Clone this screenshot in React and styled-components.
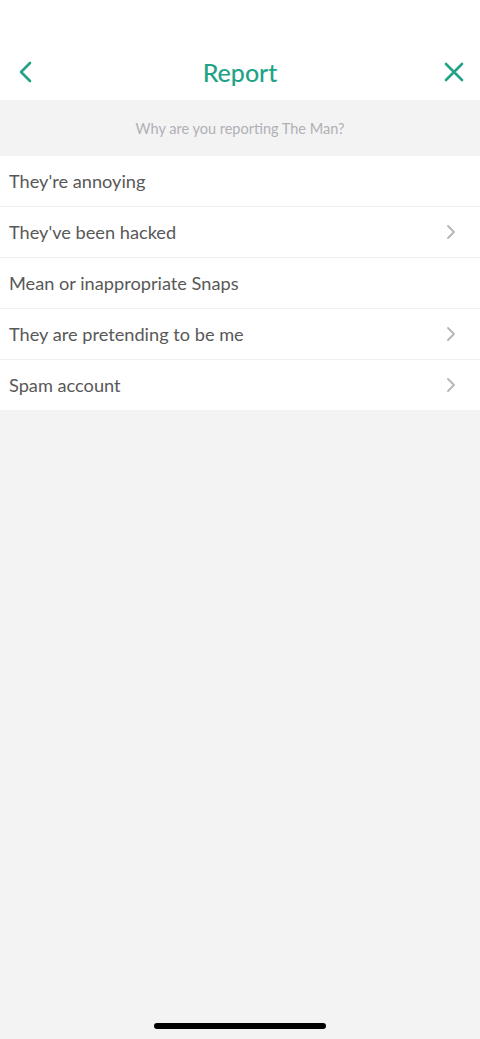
import React from "react";
import styled, { createGlobalStyle } from "styled-components";

const GlobalStyle = createGlobalStyle`
	html, body {
		margin: 0;
		padding: 0;
		background: #f3f3f3;
		font-family: Lato, "Noto Sans", sans-serif;
	}
`;

const reasons = [
	{ label: "They're annoying", more: false },
	{ label: "They've been hacked", more: true },
	{ label: "Mean or inappropriate Snaps", more: false },
	{ label: "They are pretending to be me", more: true },
	{ label: "Spam account", more: true },
];

function App() {
	return (
		<Page>
			<GlobalStyle />
			<Header>
				<IconButton aria-label="Back">
					<svg width="16" height="22" viewBox="0 0 16 22">
						<path d="M12 2 L3 11 L12 20" fill="none" stroke="#22a286" strokeWidth="2.6" strokeLinecap="round" strokeLinejoin="round" />
					</svg>
				</IconButton>
				<Title>Report</Title>
				<IconButton aria-label="Close">
					<svg width="20" height="20" viewBox="0 0 20 20">
						<path d="M2 2 L18 18 M18 2 L2 18" fill="none" stroke="#22a286" strokeWidth="2.6" strokeLinecap="round" />
					</svg>
				</IconButton>
			</Header>
			<Prompt>Why are you reporting The Man?</Prompt>
			<List>
				{reasons.map((r) => (
					<Row key={r.label}>
						<Label>{r.label}</Label>
						{r.more && (
							<svg width="10" height="16" viewBox="0 0 10 16">
								<path d="M2 2 L8 8 L2 14" fill="none" stroke="#b5b5b5" strokeWidth="1.8" strokeLinecap="round" strokeLinejoin="round" />
							</svg>
						)}
					</Row>
				))}
			</List>
			<Spacer />
			<HomeBar />
		</Page>
	);
}

const Page = styled.div`
	min-height: 1039px;
	display: flex;
	flex-direction: column;
	background: #f3f3f3;
`;

const Header = styled.header`
	height: 100px;
	background: #fff;
	display: flex;
	align-items: flex-end;
	justify-content: space-between;
	padding: 0 14px 14px 14px;
	box-sizing: border-box;
`;

const IconButton = styled.button`
	border: none;
	background: none;
	padding: 0;
	width: 24px;
	height: 24px;
	display: flex;
	align-items: center;
	justify-content: center;
	margin-bottom: 2px;
`;

const Title = styled.h1`
	margin: 0;
	font-size: 25px;
	font-weight: 500;
	color: #22a286;
	line-height: 28px;
`;

const Prompt = styled.div`
	height: 56px;
	display: flex;
	align-items: center;
	justify-content: center;
	font-size: 14.5px;
	color: #b0b0b6;
`;

const List = styled.ul`
	margin: 0;
	padding: 0;
	list-style: none;
	background: #fff;
`;

const Row = styled.li`
	height: 50px;
	display: flex;
	align-items: center;
	justify-content: space-between;
	padding: 0 24px 0 9px;
	border-bottom: 1px solid #f0f0f0;
	&:last-child {
		border-bottom: none;
	}
`;

const Label = styled.span`
	font-size: 18.2px;
	color: #585858;
`;

const Spacer = styled.div`
	flex: 1;
`;

const HomeBar = styled.div`
	width: 172px;
	height: 6px;
	border-radius: 3px;
	background: #000;
	align-self: center;
	margin-bottom: 10px;
`;

export default App;
